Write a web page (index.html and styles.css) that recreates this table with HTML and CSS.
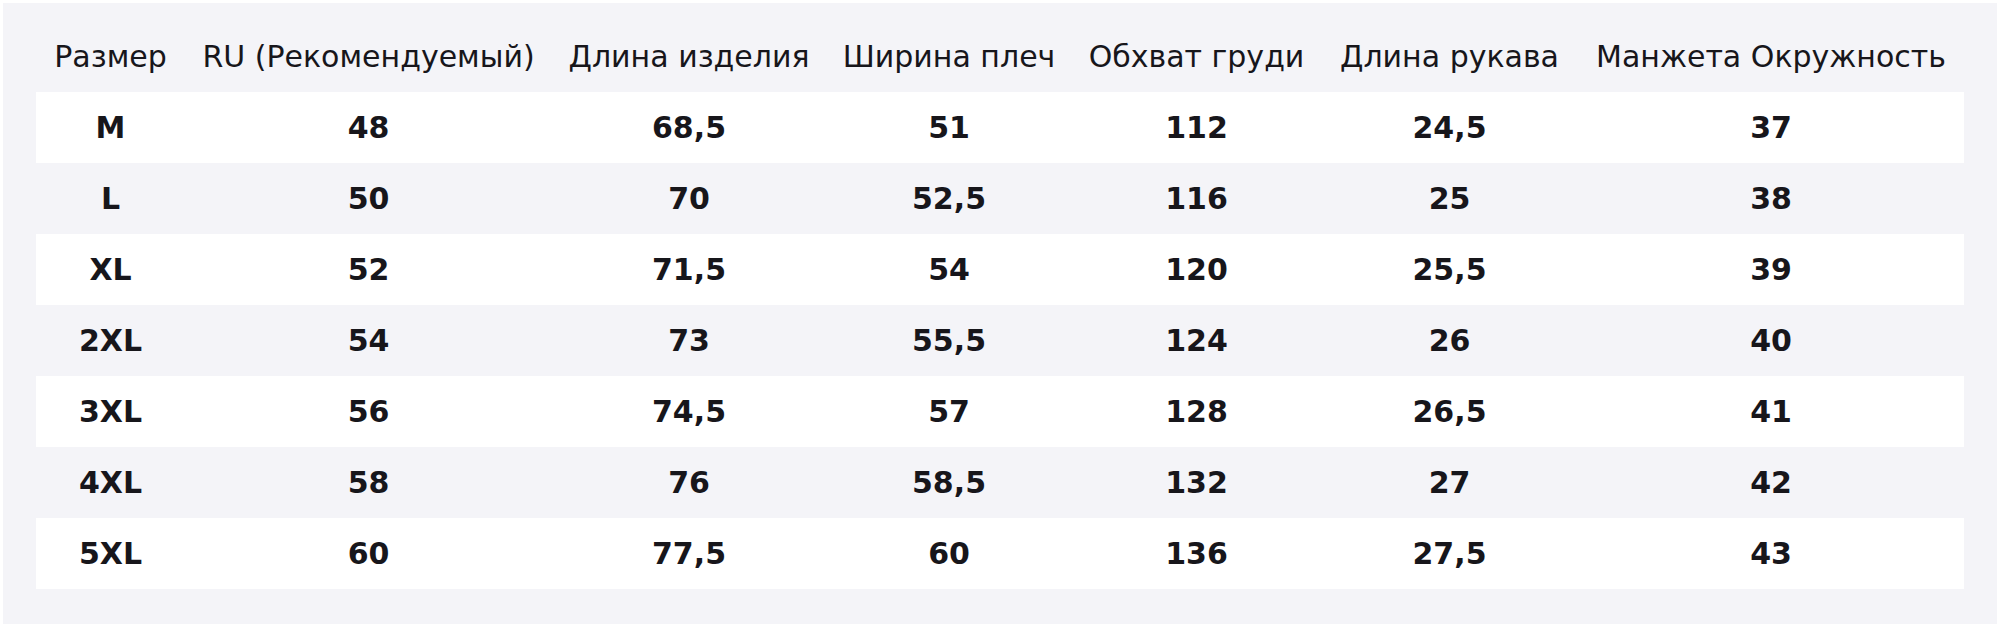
FILE: index.html
```html
<!DOCTYPE html>
<html lang="ru">
<head>
<meta charset="utf-8">
<title>Таблица размеров</title>
<link rel="stylesheet" href="styles.css">
</head>
<body>
<div class="page">
  <div class="panel">
    <table class="sizes">
      <colgroup>
        <col class="c1"><col class="c2"><col class="c3"><col class="c4"><col class="c5"><col class="c6"><col class="c7">
      </colgroup>
      <thead>
        <tr>
          <th>Размер</th><th>RU (Рекомендуемый)</th><th>Длина изделия</th><th>Ширина плеч</th><th>Обхват груди</th><th>Длина рукава</th><th>Манжета Окружность</th>
        </tr>
      </thead>
      <tbody>
        <tr><td>M</td><td>48</td><td>68,5</td><td>51</td><td>112</td><td>24,5</td><td>37</td></tr>
        <tr><td>L</td><td>50</td><td>70</td><td>52,5</td><td>116</td><td>25</td><td>38</td></tr>
        <tr><td>XL</td><td>52</td><td>71,5</td><td>54</td><td>120</td><td>25,5</td><td>39</td></tr>
        <tr><td>2XL</td><td>54</td><td>73</td><td>55,5</td><td>124</td><td>26</td><td>40</td></tr>
        <tr><td>3XL</td><td>56</td><td>74,5</td><td>57</td><td>128</td><td>26,5</td><td>41</td></tr>
        <tr><td>4XL</td><td>58</td><td>76</td><td>58,5</td><td>132</td><td>27</td><td>42</td></tr>
        <tr><td>5XL</td><td>60</td><td>77,5</td><td>60</td><td>136</td><td>27,5</td><td>43</td></tr>
      </tbody>
    </table>
  </div>
</div>
</body>
</html>
```
FILE: styles.css
```css
html, body {
  margin: 0;
  padding: 0;
  background: #ffffff;
}
.page {
  padding: 3px;
}
.panel {
  background: #f4f4f8;
  padding: 17px 33px 35px 33px;
  height: 621px;
  box-sizing: border-box;
}
.sizes {
  width: 100%;
  table-layout: fixed;
  border-collapse: collapse;
  font-family: "DejaVu Sans", Verdana, sans-serif;
  color: #17161b;
}
.c1 { width: 149px; }
.c2 { width: 367px; }
.c3 { width: 274px; }
.c4 { width: 246px; }
.c5 { width: 249px; }
.c6 { width: 257px; }
.c7 { width: 386px; }
.sizes th {
  font-weight: normal;
  font-size: 30px;
  height: 72px;
  padding: 0;
  text-align: center;
  vertical-align: middle;
  white-space: nowrap;
}
.sizes td {
  font-weight: bold;
  font-size: 30px;
  height: 71px;
  padding: 0;
  text-align: center;
  vertical-align: middle;
  white-space: nowrap;
}
.sizes tbody tr:nth-child(odd) {
  background: #ffffff;
}
```
